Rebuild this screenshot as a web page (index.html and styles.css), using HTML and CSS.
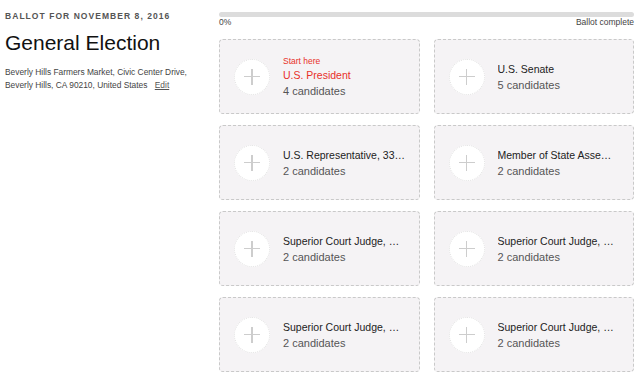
FILE: index.html
```html
<html lang="en">
  <head>
    <meta charset="UTF-8" />
    <meta name="viewport" content="width=device-width, initial-scale=1.0" />
    <title>Ballot - General Election</title>
    <link rel="stylesheet" href="styles.css">
  </head>
  <body>
    <div class="page">
      <div class="sidebar">
        <div class="eyebrow">Ballot for November 8, 2016</div>
        <h1>General Election</h1>
        <p class="address">
          Beverly Hills Farmers Market, Civic Center Drive,<br />
          Beverly Hills, CA 90210, United States <a href="#">Edit</a>
        </p>
      </div>

      <div class="main">
        <div class="progress">
          <div class="bar"><div class="fill" style="width: 0%"></div></div>
          <div class="progress-labels">
            <span>0%</span>
            <span>Ballot complete</span>
          </div>
        </div>

        <div class="races">
          <div class="race current">
            <div class="plus"></div>
            <div class="info">
              <div class="hint">Start here</div>
              <div class="name">U.S. President</div>
              <div class="count">4 candidates</div>
            </div>
          </div>
          <div class="race">
            <div class="plus"></div>
            <div class="info">
              <div class="name">U.S. Senate</div>
              <div class="count">5 candidates</div>
            </div>
          </div>
          <div class="race">
            <div class="plus"></div>
            <div class="info">
              <div class="name">U.S. Representative, 33rd District</div>
              <div class="count">2 candidates</div>
            </div>
          </div>
          <div class="race">
            <div class="plus"></div>
            <div class="info">
              <div class="name">Member of State Assembly, 50th District</div>
              <div class="count">2 candidates</div>
            </div>
          </div>
          <div class="race">
            <div class="plus"></div>
            <div class="info">
              <div class="name">Superior Court Judge, Office No. 11</div>
              <div class="count">2 candidates</div>
            </div>
          </div>
          <div class="race">
            <div class="plus"></div>
            <div class="info">
              <div class="name">Superior Court Judge, Office No. 42</div>
              <div class="count">2 candidates</div>
            </div>
          </div>
          <div class="race">
            <div class="plus"></div>
            <div class="info">
              <div class="name">Superior Court Judge, Office No. 84</div>
              <div class="count">2 candidates</div>
            </div>
          </div>
          <div class="race">
            <div class="plus"></div>
            <div class="info">
              <div class="name">Superior Court Judge, Office No. 158</div>
              <div class="count">2 candidates</div>
            </div>
          </div>
        </div>
      </div>
    </div>
  </body>
</html>
```

FILE: styles.css
```css
body {
  margin: 0;
  background-color: #fff;
  font-family: "Liberation Sans", Arial, sans-serif;
  color: #222;
}
.page {
  display: flex;
  padding: 11px 6px 0 5px;
  gap: 14px;
}
.sidebar {
  width: 200px;
  flex-shrink: 0;
}
.eyebrow {
  font-size: 8.5px;
  font-weight: bold;
  text-transform: uppercase;
  letter-spacing: 1.05px;
  color: #555;
  line-height: 10px;
}
h1 {
  margin: 9px 0 0;
  font-size: 21px;
  font-weight: normal;
  line-height: 26px;
  color: #111;
}
.address {
  margin: 10px 0 0;
  font-size: 8.4px;
  line-height: 13px;
  color: #444;
}
.address a {
  margin-left: 5px;
  color: #555;
}
.main {
  flex: 1;
}
.progress {
  padding-top: 1px;
}
.bar {
  height: 5px;
  border-radius: 3px;
  background-color: #dcdcdc;
  overflow: hidden;
}
.fill {
  height: 100%;
  background-color: #e8302a;
}
.progress-labels {
  display: flex;
  justify-content: space-between;
  font-size: 8.5px;
  line-height: 11px;
  color: #444;
}
.races {
  display: grid;
  grid-template-columns: 1fr 1fr;
  gap: 11px 14px;
  margin-top: 11px;
}
.race {
  display: flex;
  align-items: center;
  height: 73px;
  padding: 0 13px 0 14px;
  gap: 13px;
  background-color: #f5f3f5;
  border: 1px dashed #c9c9c9;
  border-radius: 4px;
  min-width: 0;
}
.plus {
  position: relative;
  flex-shrink: 0;
  width: 34px;
  height: 34px;
  border-radius: 50%;
  background-color: #fff;
  border: 1px dotted #e4e4e4;
}
.plus::before,
.plus::after {
  content: "";
  position: absolute;
  left: 50%;
  top: 50%;
  background-color: #cdcdcd;
}
.plus::before {
  width: 16px;
  height: 1.5px;
  margin: -0.75px 0 0 -8px;
}
.plus::after {
  width: 1.5px;
  height: 16px;
  margin: -8px 0 0 -0.75px;
}
.info {
  min-width: 0;
  line-height: 16px;
}
.hint {
  font-size: 8.5px;
  line-height: 12px;
  color: #e8302a;
}
.name {
  font-size: 10.5px;
  white-space: nowrap;
  overflow: hidden;
  text-overflow: ellipsis;
}
.count {
  font-size: 11px;
  color: #555;
}
.current .name {
  color: #e8302a;
}
```
